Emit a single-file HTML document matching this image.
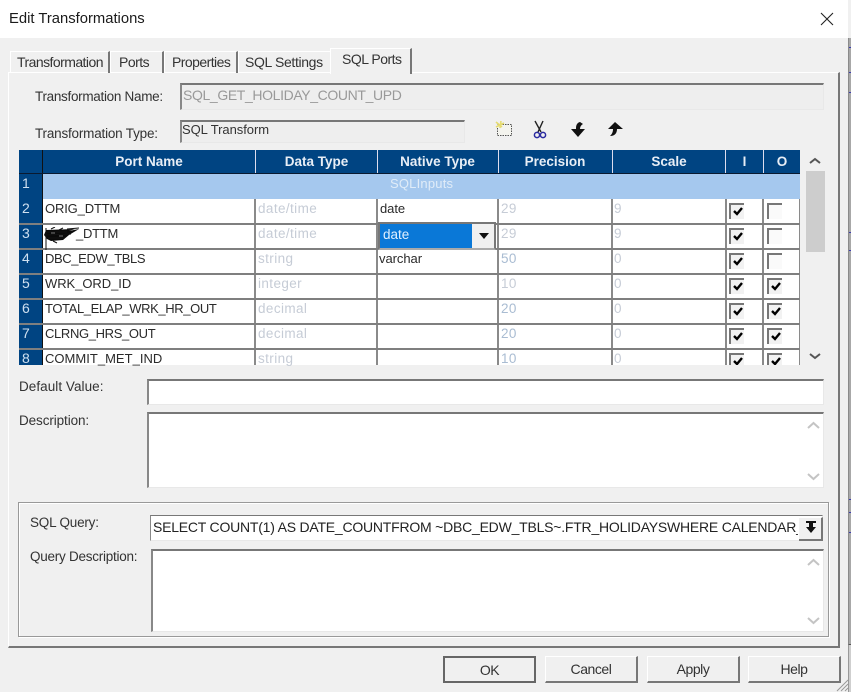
<!DOCTYPE html>
<html><head><meta charset="utf-8">
<style>
html,body{margin:0;padding:0;width:851px;height:692px;overflow:hidden;background:#f0f0f0;}
body{position:relative;font-family:"Liberation Sans",sans-serif;font-size:12px;color:#222;}
.a{position:absolute;box-sizing:border-box;}
.t{position:absolute;white-space:nowrap;line-height:14px;}
.in{position:absolute;box-sizing:border-box;background:#fff;border-top:2px solid #777;border-left:2px solid #888;border-right:1px solid #e8e8e8;border-bottom:1px solid #e8e8e8;}
.btn{position:absolute;box-sizing:border-box;top:656px;height:27px;width:93px;background:#f0f0f0;border-top:1px solid #fff;border-left:1px solid #fff;border-right:2px solid #777;border-bottom:2px solid #777;text-align:center;line-height:24px;font-size:14px;letter-spacing:-.45px;color:#333;}
.tab{position:absolute;white-space:nowrap;font-size:14px;letter-spacing:-.55px;line-height:16px;color:#333;}
.hc{position:absolute;top:150px;height:24px;background:#004482;color:#e8eef6;font-weight:bold;font-size:13.5px;text-align:center;line-height:24px;}
.v{position:absolute;width:2px;background:#8a8a8a;}
.h{position:absolute;left:19px;width:781px;height:2px;background:#7f7f7f;}
.n{position:absolute;left:19px;width:23px;background:#004482;color:#cfe0f0;font-size:14px;padding-left:3px;box-sizing:border-box;line-height:20px;overflow:hidden;}
.nm{position:absolute;left:45px;white-space:nowrap;font-size:13px;line-height:15px;letter-spacing:-.05px;color:#2a2a2a;}
.g{position:absolute;white-space:nowrap;font-size:13.5px;line-height:15px;color:#c6ccd6;letter-spacing:.4px;}
.cb{position:absolute;width:15px;height:16px;box-sizing:border-box;border-top:2px solid #777;border-left:2px solid #777;background:#f2f2f2;}
.cb svg{position:absolute;left:1px;top:1px;}
.b{position:absolute;left:849px;width:2px;height:1px;background:#3a3ab0;}
</style></head>
<body>
<!-- title -->
<div class="a" style="left:0;top:0;width:848px;height:38px;background:#fff"></div>
<div class="t" style="left:9px;top:11px;font-size:14.8px;line-height:16px;color:#1a1a1a">Edit Transformations</div>
<svg class="a" style="left:820px;top:12px" width="14" height="14"><path d="M1 1L13 13M13 1L1 13" stroke="#222" stroke-width="1.1" fill="none"/></svg>
<!-- right strip -->
<div class="a" style="left:848px;top:38px;width:3px;height:606px;background:#a8a8a8;border-left:1px solid #8a8a8a"></div>
<div class="a" style="left:848px;top:644px;width:3px;height:48px;background:#cfcfcf;border-left:1px solid #999;border-top:1px solid #555"></div>
<div class="b" style="top:47px"></div><div class="b" style="top:72px"></div><div class="b" style="top:92px"></div><div class="b" style="top:232px"></div><div class="b" style="top:250px"></div><div class="b" style="top:499px"></div><div class="b" style="top:512px"></div><div class="b" style="top:532px"></div>
<!-- panel -->
<div class="a" style="left:8px;top:72px;width:832px;height:576px;background:#f0f0f0;border-top:1px solid #fff;border-left:1px solid #fff;border-right:2px solid #777;border-bottom:2px solid #777"></div>
<!-- tabs -->
<div class="a" style="left:10px;top:51px;width:100px;height:22px;border-top:1px solid #fff;border-left:1px solid #fff;border-right:2px solid #777"></div>
<div class="a" style="left:110px;top:51px;width:54px;height:22px;border-top:1px solid #fff;border-left:1px solid #fff;border-right:2px solid #777"></div>
<div class="a" style="left:164px;top:51px;width:74px;height:22px;border-top:1px solid #fff;border-left:1px solid #fff;border-right:2px solid #777"></div>
<div class="a" style="left:238px;top:51px;width:92px;height:22px;border-top:1px solid #fff;border-left:1px solid #fff"></div>
<div class="a" style="left:330px;top:48px;width:82px;height:26px;background:#f0f0f0;border-top:1px solid #fff;border-left:1px solid #fff;border-right:2px solid #777"></div>
<div class="tab" style="left:17px;top:54px">Transformation</div>
<div class="tab" style="left:119px;top:54px;letter-spacing:-.5px">Ports</div>
<div class="tab" style="left:172px;top:54px;letter-spacing:-.55px">Properties</div>
<div class="tab" style="left:245px;top:54px;letter-spacing:-.35px">SQL Settings</div>
<div class="tab" style="left:342px;top:51px;letter-spacing:-.5px">SQL Ports</div>
<!-- name/type -->
<div class="t" style="left:35px;top:90px;font-size:13.5px;letter-spacing:-.3px;color:#333">Transformation Name:</div>
<div class="t" style="left:35px;top:127px;font-size:13.5px;letter-spacing:-.2px;color:#333">Transformation Type:</div>
<div class="in" style="left:180px;top:83px;width:644px;height:27px;background:#eeeeee"></div>
<div class="t" style="left:183px;top:88px;font-size:14px;color:#999;letter-spacing:-.37px">SQL_GET_HOLIDAY_COUNT_UPD</div>
<div class="in" style="left:180px;top:120px;width:285px;height:23px;background:#eeeeee"></div>
<div class="t" style="left:182px;top:123px;font-size:13px;letter-spacing:-.05px;color:#333">SQL Transform</div>
<!-- toolbar icons -->
<svg class="a" style="left:495px;top:120px" width="20" height="18"><rect x="2.5" y="4.5" width="14" height="11" fill="#f4f4ee" stroke="#555" stroke-width="1" stroke-dasharray="1.5 1"/><path d="M1 2L7 7M6 1L5 8M1 7L9 3" stroke="#e6dc70" stroke-width="1.6"/></svg>
<svg class="a" style="left:532px;top:120px" width="16" height="19"><path d="M3 1L9 12M11 1L6 12" stroke="#222" stroke-width="1.4" fill="none"/><circle cx="5" cy="15" r="2.6" fill="none" stroke="#2a2aa0" stroke-width="1.5"/><circle cx="11" cy="15" r="2.6" fill="none" stroke="#2a2aa0" stroke-width="1.5"/></svg>
<svg class="a" style="left:570px;top:121px" width="16" height="17"><path d="M10 1C6 2 6 6 6 8L1 8L8 16L15 8L10 8C10 6 11 4 13 3Z" fill="#111"/></svg>
<svg class="a" style="left:608px;top:121px" width="16" height="17"><path d="M7 1L0 8L5 8C5 11 4 13 2 15C7 15 9 12 9 8L15 8Z" fill="#111"/></svg>
<!-- grid -->
<div class="a" style="left:19px;top:150px;width:781px;height:215px;background:#fff"></div>
<div class="a" style="left:19px;top:150px;width:781px;height:24px;background:#004482"></div>
<div class="hc" style="left:43px;width:212px">Port Name</div>
<div class="hc" style="left:256px;width:121px">Data Type</div>
<div class="hc" style="left:378px;width:119px">Native Type</div>
<div class="hc" style="left:499px;width:112px">Precision</div>
<div class="hc" style="left:613px;width:112px">Scale</div>
<div class="hc" style="left:726px;width:37px">I</div>
<div class="hc" style="left:764px;width:36px">O</div>
<div class="a" style="left:42px;top:150px;width:1px;height:215px;background:#111"></div>
<div class="a" style="left:255px;top:150px;width:1px;height:24px;background:#dde"></div>
<div class="a" style="left:377px;top:150px;width:1px;height:24px;background:#dde"></div>
<div class="a" style="left:498px;top:150px;width:1px;height:24px;background:#dde"></div>
<div class="a" style="left:612px;top:150px;width:1px;height:24px;background:#dde"></div>
<div class="a" style="left:725px;top:150px;width:1px;height:24px;background:#dde"></div>
<div class="a" style="left:763px;top:150px;width:1px;height:24px;background:#dde"></div>
<div class="a" style="left:43px;top:174px;width:757px;height:25px;background:#a5c8ee"></div>
<div class="a" style="left:19px;top:173px;width:781px;height:1px;background:#0a1a30"></div>
<div class="t" style="left:390px;top:177px;font-size:13px;color:#e0ecf8;letter-spacing:.2px">SQLInputs</div>
<div class="v" style="left:254px;top:199px;height:166px"></div>
<div class="v" style="left:376px;top:199px;height:166px"></div>
<div class="v" style="left:497px;top:199px;height:166px"></div>
<div class="v" style="left:611px;top:199px;height:166px"></div>
<div class="v" style="left:725px;top:199px;height:166px"></div>
<div class="v" style="left:762px;top:199px;height:166px"></div>
<div class="v" style="left:799px;top:199px;height:166px;width:1px"></div>
<div class="n" style="top:174px;height:25px;line-height:18px">1</div>
<div class="n" style="top:199px;height:24px;line-height:18px">2</div>
<div class="n" style="top:225px;height:23px;line-height:16px">3</div>
<div class="n" style="top:250px;height:23px;line-height:16px">4</div>
<div class="n" style="top:275px;height:23px;line-height:16px">5</div>
<div class="n" style="top:300px;height:23px;line-height:16px">6</div>
<div class="n" style="top:325px;height:23px;line-height:16px">7</div>
<div class="n" style="top:350px;height:15px;line-height:16px">8</div>
<div class="h" style="top:223px"></div><div class="h" style="top:248px"></div><div class="h" style="top:273px"></div><div class="h" style="top:298px"></div><div class="h" style="top:323px"></div><div class="h" style="top:348px"></div>
<div class="nm" style="top:201px;letter-spacing:-.15px">ORIG_DTTM</div>
<div class="nm" style="top:226px;left:76px;letter-spacing:-.25px">_DTTM</div>
<svg class="a" style="left:43px;top:227px" width="38" height="24"><path d="M3 3L32 2L26 4L36 2L26 8L20 13L8 14L4 12L1 8Z" fill="#0a0a0a"/><path d="M3 5L24 5M2 8L28 7M5 11L22 11M8 2L12 0M16 3L20 1M10 14L14 16M3 1V23M24 2L36 1" stroke="#111" stroke-width="1" fill="none"/><path d="M8 6L12 6M16 9L20 9" stroke="#777" stroke-width="1"/></svg>
<div class="nm" style="top:251px;letter-spacing:-.38px">DBC_EDW_TBLS</div>
<div class="nm" style="top:276px">WRK_ORD_ID</div>
<div class="nm" style="top:301px;letter-spacing:-.38px">TOTAL_ELAP_WRK_HR_OUT</div>
<div class="nm" style="top:326px;letter-spacing:-.35px">CLRNG_HRS_OUT</div>
<div class="nm" style="top:351px;letter-spacing:.02px">COMMIT_MET_IND</div>
<div class="g" style="left:258px;top:201px">date/time</div>
<div class="g" style="left:258px;top:226px">date/time</div>
<div class="g" style="left:258px;top:251px">string</div>
<div class="g" style="left:258px;top:276px">integer</div>
<div class="g" style="left:258px;top:301px">decimal</div>
<div class="g" style="left:258px;top:326px">decimal</div>
<div class="g" style="left:258px;top:351px">string</div>
<div class="nm" style="left:380px;top:201px">date</div>
<div class="nm" style="left:379px;top:251px">varchar</div>
<!-- combo -->
<div class="a" style="left:378px;top:222px;width:118px;height:28px;background:#f0f0f0;border-top:2px solid #777;border-left:2px solid #777;border-right:2px solid #777;border-bottom:2px solid #aaa"></div>
<div class="a" style="left:380px;top:224px;width:92px;height:24px;background:#0a78d7"></div>
<div class="t" style="left:383px;top:228px;font-size:13.5px;color:#dff0ff">date</div>
<div class="a" style="left:473px;top:224px;width:21px;height:24px;background:#f0f0f0"></div>
<svg class="a" style="left:478px;top:233px" width="12" height="7"><path d="M1 0H11L6 6Z" fill="#111"/></svg>
<!-- numbers -->
<div class="g" style="left:501px;top:201px">29</div><div class="g" style="left:501px;top:226px">29</div><div class="g" style="left:501px;top:251px;color:#a9bcd2">50</div><div class="g" style="left:501px;top:276px">10</div><div class="g" style="left:501px;top:301px;color:#a9bcd2">20</div><div class="g" style="left:501px;top:326px;color:#a9bcd2">20</div><div class="g" style="left:501px;top:351px;color:#a9bcd2">10</div>
<div class="g" style="left:614px;top:201px">9</div><div class="g" style="left:614px;top:226px">9</div><div class="g" style="left:614px;top:251px">0</div><div class="g" style="left:614px;top:276px">0</div><div class="g" style="left:614px;top:301px">0</div><div class="g" style="left:614px;top:326px">0</div><div class="g" style="left:614px;top:351px">0</div>
<!-- checkboxes -->
<div class="cb" style="left:729px;top:203px"><svg width="12" height="11"><path d="M2 5L5 8L10 2" stroke="#000" stroke-width="2.4" fill="none"/></svg></div>
<div class="cb" style="left:729px;top:228px"><svg width="12" height="11"><path d="M2 5L5 8L10 2" stroke="#000" stroke-width="2.4" fill="none"/></svg></div>
<div class="cb" style="left:729px;top:253px"><svg width="12" height="11"><path d="M2 5L5 8L10 2" stroke="#000" stroke-width="2.4" fill="none"/></svg></div>
<div class="cb" style="left:729px;top:278px"><svg width="12" height="11"><path d="M2 5L5 8L10 2" stroke="#000" stroke-width="2.4" fill="none"/></svg></div>
<div class="cb" style="left:729px;top:303px"><svg width="12" height="11"><path d="M2 5L5 8L10 2" stroke="#000" stroke-width="2.4" fill="none"/></svg></div>
<div class="cb" style="left:729px;top:328px"><svg width="12" height="11"><path d="M2 5L5 8L10 2" stroke="#000" stroke-width="2.4" fill="none"/></svg></div>
<div class="a" style="left:729px;top:353px;width:15px;height:12px;overflow:hidden"><div class="cb" style="left:0;top:0"><svg width="12" height="11"><path d="M2 5L5 8L10 2" stroke="#000" stroke-width="2.4" fill="none"/></svg></div></div>
<div class="cb" style="left:767px;top:203px;background:#fafafa"></div>
<div class="cb" style="left:767px;top:228px;background:#fafafa"></div>
<div class="cb" style="left:767px;top:253px;background:#fafafa"></div>
<div class="cb" style="left:767px;top:278px"><svg width="12" height="11"><path d="M2 5L5 8L10 2" stroke="#000" stroke-width="2.4" fill="none"/></svg></div>
<div class="cb" style="left:767px;top:303px"><svg width="12" height="11"><path d="M2 5L5 8L10 2" stroke="#000" stroke-width="2.4" fill="none"/></svg></div>
<div class="cb" style="left:767px;top:328px"><svg width="12" height="11"><path d="M2 5L5 8L10 2" stroke="#000" stroke-width="2.4" fill="none"/></svg></div>
<div class="a" style="left:767px;top:353px;width:15px;height:12px;overflow:hidden"><div class="cb" style="left:0;top:0"><svg width="12" height="11"><path d="M2 5L5 8L10 2" stroke="#000" stroke-width="2.4" fill="none"/></svg></div></div>
<!-- grid scrollbar -->
<div class="a" style="left:801px;top:150px;width:24px;height:215px;background:#f0f0f0"></div>
<div class="a" style="left:806px;top:171px;width:19px;height:81px;background:#cdcdcd"></div>
<svg class="a" style="left:809px;top:157px" width="12" height="8"><path d="M1 6L6 2L11 6" stroke="#555" stroke-width="2" fill="none"/></svg>
<svg class="a" style="left:809px;top:352px" width="12" height="8"><path d="M1 2L6 6L11 2" stroke="#555" stroke-width="2" fill="none"/></svg>
<!-- default + description -->
<div class="t" style="left:19px;top:380px;font-size:13.5px;letter-spacing:.05px;color:#333">Default Value:</div>
<div class="in" style="left:147px;top:379px;width:677px;height:26px"></div>
<div class="t" style="left:19px;top:414px;font-size:13.5px;letter-spacing:-.1px;color:#333">Description:</div>
<div class="in" style="left:147px;top:412px;width:677px;height:76px"></div>
<svg class="a" style="left:807px;top:421px" width="13" height="9"><path d="M1 7L6.5 2L12 7" stroke="#c4c4c4" stroke-width="2" fill="none"/></svg>
<svg class="a" style="left:807px;top:472px" width="13" height="9"><path d="M1 2L6.5 7L12 2" stroke="#c4c4c4" stroke-width="2" fill="none"/></svg>
<!-- group -->
<div class="a" style="left:18px;top:502px;width:811px;height:135px;border:1px solid #999;box-shadow:inset 1px 1px 0 #fff,1px 1px 0 #fff"></div>
<div class="t" style="left:30px;top:516px;font-size:13.5px;letter-spacing:-.2px;color:#333">SQL Query:</div>
<div class="t" style="left:30px;top:550px;font-size:13.5px;letter-spacing:-.25px;color:#333">Query Description:</div>
<div class="in" style="left:150px;top:515px;width:673px;height:26px;border-top:1px solid #777;border-left:1px solid #888"></div>
<div class="t" style="left:153px;top:519px;width:645px;overflow:hidden;font-size:14px;line-height:16px;letter-spacing:-.22px;color:#222">SELECT COUNT(1) AS DATE_COUNTFROM ~DBC_EDW_TBLS~.FTR_HOLIDAYSWHERE CALENDAR_DATE</div>
<div class="a" style="left:799px;top:517px;width:24px;height:24px;background:#f0f0f0;border-top:1px solid #fff;border-right:2px solid #777;border-bottom:2px solid #777"></div>
<svg class="a" style="left:804px;top:520px" width="14" height="14"><path d="M2 1H12V3H2ZM5 3H9V7H12L7 13L2 7H5Z" fill="#111"/></svg>
<div class="in" style="left:151px;top:549px;width:673px;height:83px"></div>
<svg class="a" style="left:807px;top:558px" width="13" height="9"><path d="M1 7L6.5 2L12 7" stroke="#c4c4c4" stroke-width="2" fill="none"/></svg>
<svg class="a" style="left:807px;top:616px" width="13" height="9"><path d="M1 2L6.5 7L12 2" stroke="#c4c4c4" stroke-width="2" fill="none"/></svg>
<!-- buttons -->
<div class="btn" style="left:443px;border:2px solid #666">OK</div>
<div class="btn" style="left:545px">Cancel</div>
<div class="btn" style="left:647px">Apply</div>
<div class="btn" style="left:748px">Help</div>
<svg class="a" style="left:836px;top:678px" width="13" height="14"><path d="M12 2L1 13M12 6L5 13M12 10L9 13" stroke="#999" stroke-width="1"/></svg>
</body></html>
